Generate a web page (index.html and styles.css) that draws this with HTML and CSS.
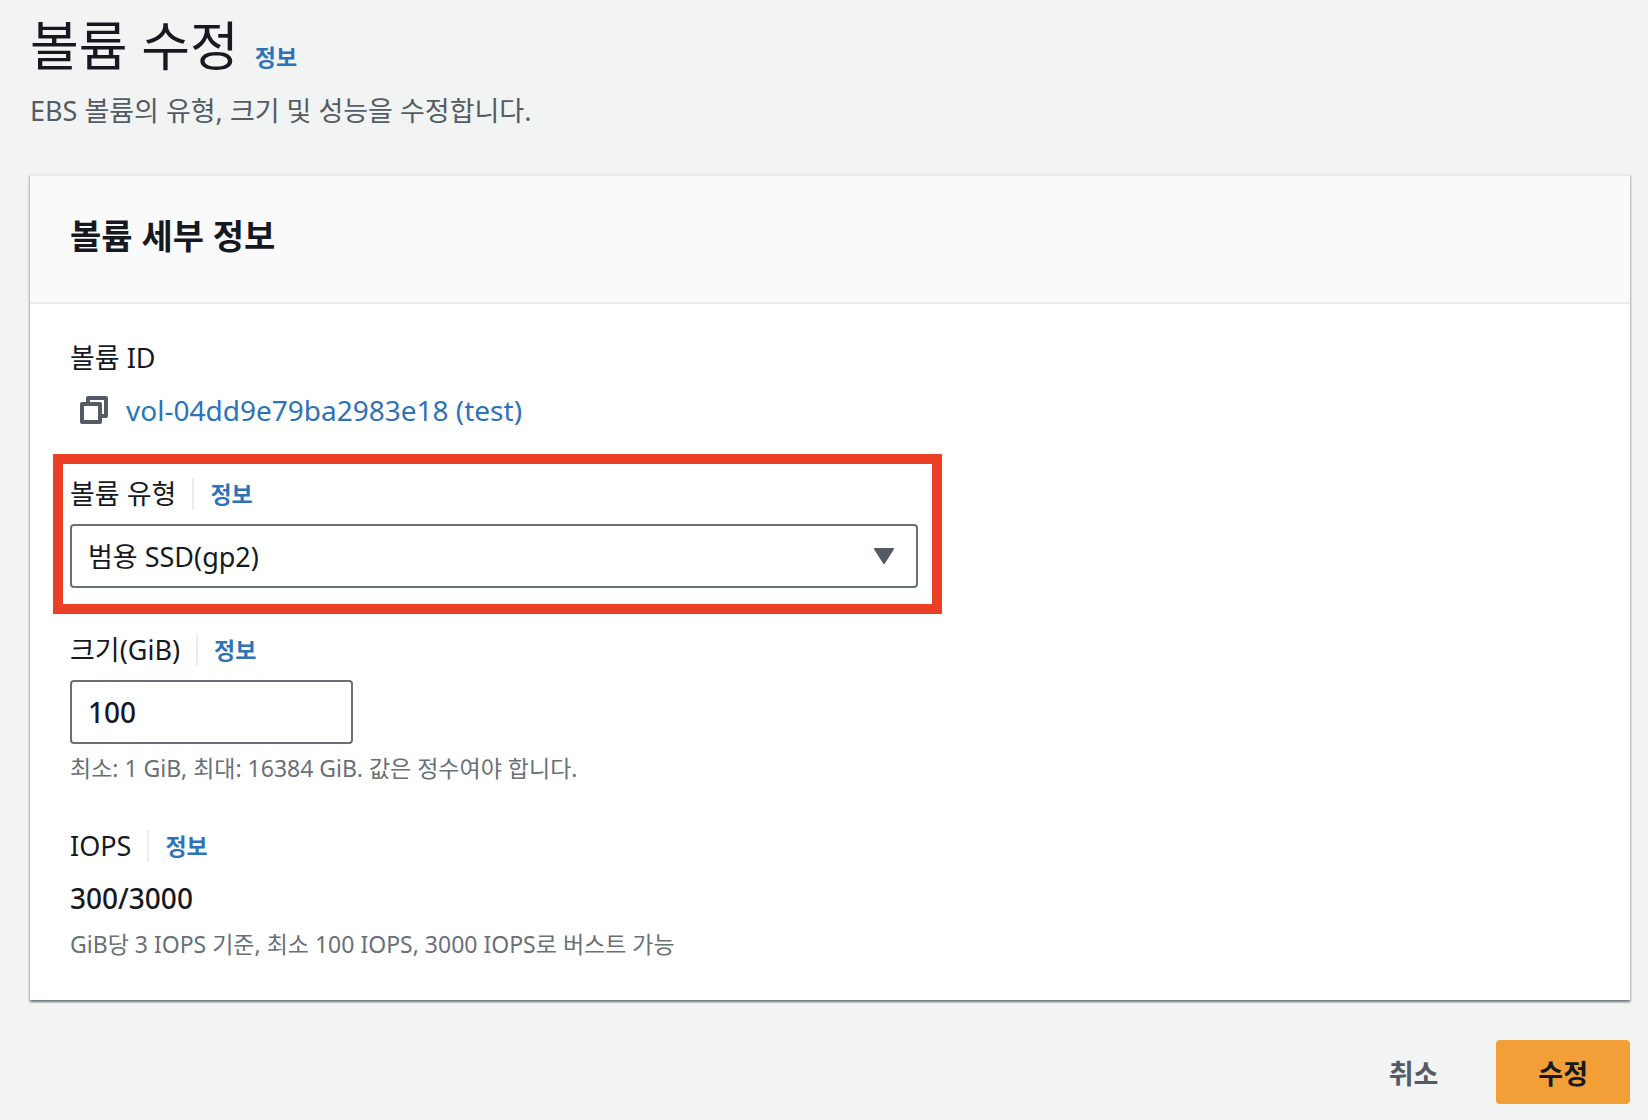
FILE: index.html
```html
<!DOCTYPE html>
<html lang="ko">
<head>
  <meta charset="UTF-8">
  <meta name="viewport" content="width=device-width, initial-scale=1.0">
  <title>볼륨 수정</title>
  <link rel="stylesheet" href="styles.css">
</head>
<body>
  <header class="page-header">
    <div class="page-title">
      <h1>볼륨 수정</h1>
      <a class="info" href="#">정보</a>
    </div>
    <p class="description">EBS 볼륨의 유형, 크기 및 성능을 수정합니다.</p>
  </header>

  <form>
    <section class="card">
      <div class="card-header">
        <h2>볼륨 세부 정보</h2>
      </div>

      <div class="card-body">
        <div class="field">
          <div class="label-row">
            <span>볼륨 ID</span>
          </div>
          <div class="value volume-id">
            <button type="button" class="copy" aria-label="복사">
              <svg width="28" height="28" viewBox="0 0 28 28" fill="none" stroke="#545b64" stroke-width="4" stroke-linejoin="round">
                <path d="M2 8h18v18H2z" />
                <path d="M8 8V2h18v18h-6" />
              </svg>
            </button>
            <a href="#">vol-04dd9e79ba2983e18 (test)</a>
          </div>
        </div>

        <div class="field highlight">
          <div class="label-row">
            <label for="type">볼륨 유형</label>
            <a class="info divided" href="#">정보</a>
          </div>
          <div class="select">
            <select id="type">
              <option>범용 SSD(gp2)</option>
            </select>
            <svg class="arrow" width="22" height="16" viewBox="0 0 22 16">
              <path d="M2 1h18L11 15z" fill="#545b64" stroke="#545b64" stroke-width="2" stroke-linejoin="round" />
            </svg>
          </div>
        </div>

        <div class="field">
          <div class="label-row">
            <label for="size">크기(GiB)</label>
            <a class="info divided" href="#">정보</a>
          </div>
          <input type="text" id="size" value="100">
          <p class="hint">최소: 1 GiB, 최대: 16384 GiB. 값은 정수여야 합니다.</p>
        </div>

        <div class="field">
          <div class="label-row">
            <span>IOPS</span>
            <a class="info divided" href="#">정보</a>
          </div>
          <div class="value iops">300/3000</div>
          <p class="hint">GiB당 3 IOPS 기준, 최소 100 IOPS, 3000 IOPS로 버스트 가능</p>
        </div>
      </div>
    </section>

    <div class="actions">
      <button type="button" class="btn">취소</button>
      <button type="submit" class="btn btn-primary">수정</button>
    </div>
  </form>
</body>
</html>
```
FILE: styles.css
```css
* {
  box-sizing: border-box;
}

body {
  margin: 0;
  padding: 8px 18px 14px 30px;
  background-color: #f2f4f3;
  color: #16191f;
  font-family: "Noto Sans", "Noto Sans CJK KR", sans-serif;
  font-size: 27px;
  line-height: 44px;
}

h1, h2, p {
  margin: 0;
}

a {
  color: #2e73b8;
  text-decoration: none;
}

a:hover {
  text-decoration: underline;
}

button, input, select {
  font-family: inherit;
  font-size: inherit;
  color: inherit;
}

.info {
  font-size: 23px;
  font-weight: bold;
}

/* page header */
.page-header {
  padding-bottom: 36px;
}

.page-title {
  display: flex;
  align-items: baseline;
  gap: 16px;
}

h1 {
  font-size: 53px;
  font-weight: 400;
  line-height: 76px;
}

.description {
  color: #545b64;
  line-height: 54px;
}

/* card */
.card {
  background-color: #fff;
  border-top: 2px solid #eaeded;
  box-shadow: 0 2px 2px 0 rgba(0,28,36,.3), 1px 2px 2px 0 rgba(0,28,36,.2), -1px 2px 2px 0 rgba(0,28,36,.2);
}

.card-header {
  padding: 32px 40px 38px;
  background-color: #fafafa;
  border-bottom: 2px solid #eaeded;
}

h2 {
  font-size: 34px;
  line-height: 56px;
}

.card-body {
  display: flex;
  flex-direction: column;
  gap: 40px;
  padding: 32px 40px 40px;
}

.label-row {
  display: flex;
  align-items: center;
  height: 44px;
  margin-bottom: 8px;
}

.divided {
  margin-left: 16px;
  padding-left: 16px;
  border-left: 2px solid #eaeded;
  line-height: 32px;
}

.value {
  font-size: 28px;
}

.volume-id {
  display: flex;
  align-items: center;
  gap: 18px;
}

.iops {
  font-weight: 500;
}

.copy {
  display: flex;
  margin-left: 10px;
  padding: 0;
  border: 0;
  background: none;
  cursor: pointer;
}

/* the frame reaches past the column on every side */
.highlight {
  max-width: 889px;
  margin: -18px -17px -26px;
  padding: 8px 14px 16px 7px;
  border: 10px solid #eb4025;
}

.select {
  position: relative;
}

select, input {
  display: block;
  width: 100%;
  height: 64px;
  padding: 0 16px;
  border: 2px solid #687078;
  border-radius: 4px;
  background-color: #fff;
}

select {
  appearance: none;
}

input {
  max-width: 283px;
  font-size: 28px;
  font-weight: 500;
}

.arrow {
  position: absolute;
  top: 24px;
  right: 23px;
  pointer-events: none;
}

.hint {
  margin-top: 8px;
  color: #687078;
  font-size: 23px;
  line-height: 32px;
}

/* buttons */
.actions {
  display: flex;
  justify-content: flex-end;
  gap: 16px;
  margin-top: 40px;
}

.btn {
  height: 64px;
  padding: 0 42px;
  border: 0;
  border-radius: 4px;
  background: none;
  color: #545b64;
  font-weight: bold;
  cursor: pointer;
}

.btn-primary {
  background-color: #f29f38;
  color: #16191f;
}
```
